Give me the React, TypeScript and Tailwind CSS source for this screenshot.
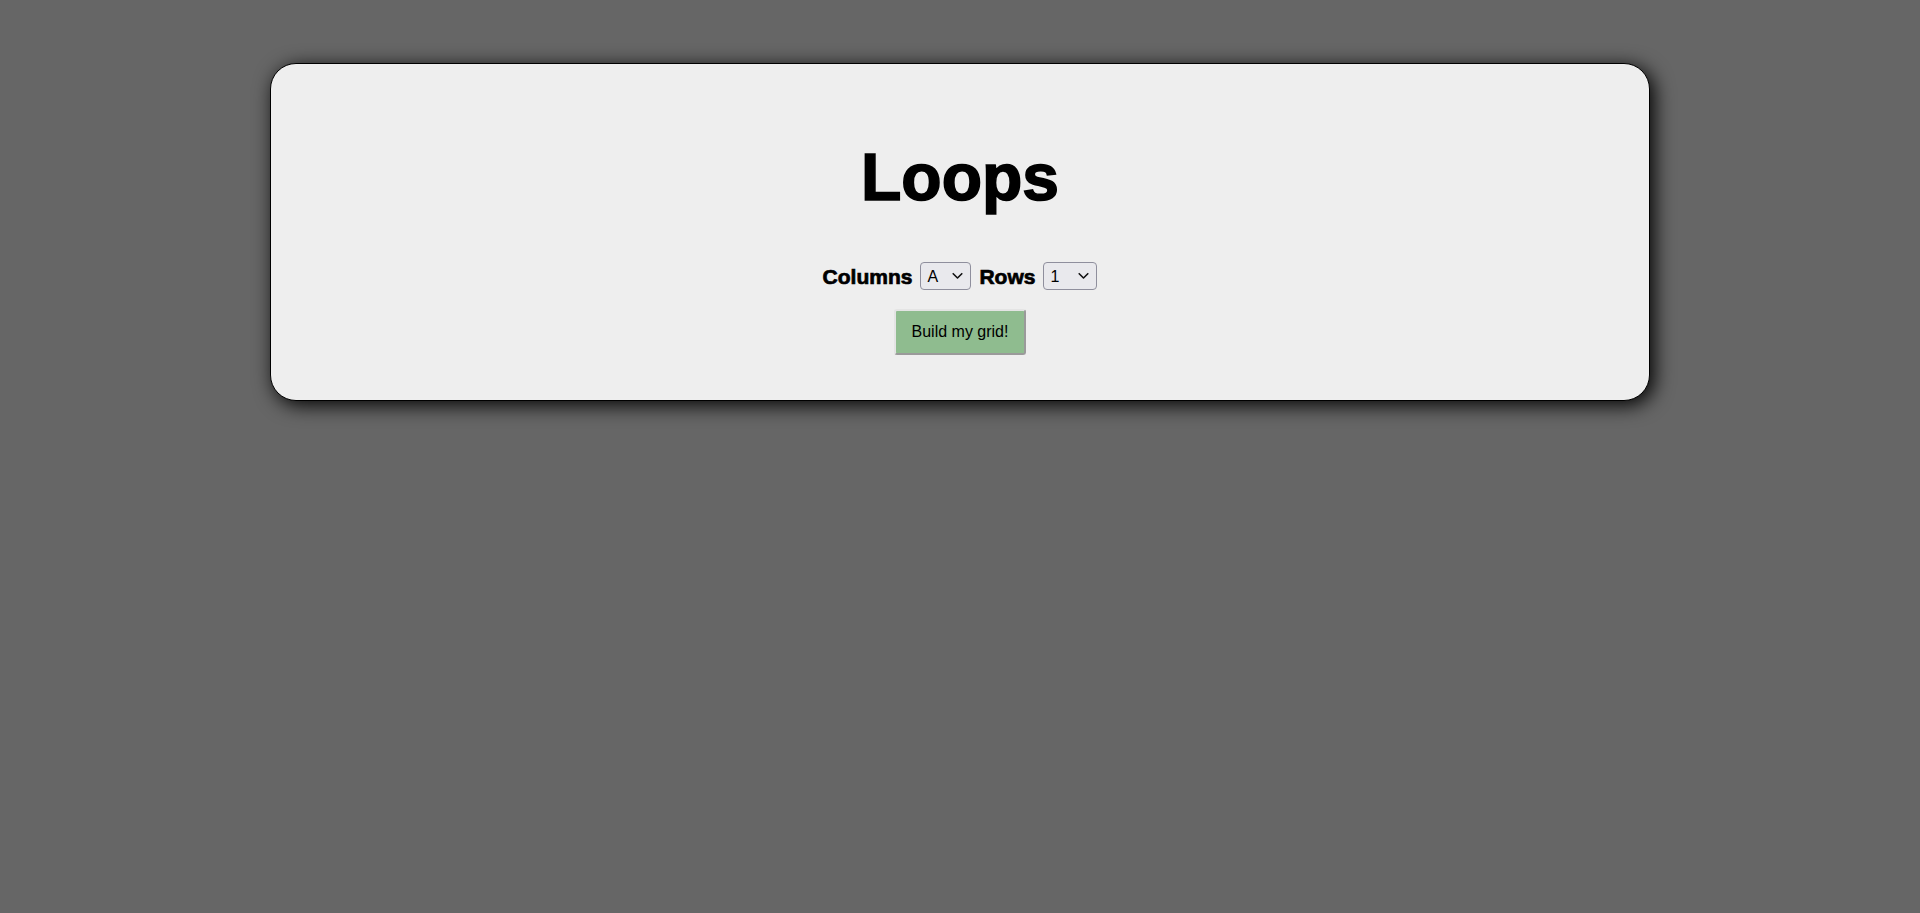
import { useState } from "react";

const cols = ["A", "B", "C", "D", "E", "F", "G", "H", "I", "J"];
const rows = ["1", "2", "3", "4", "5", "6", "7", "8", "9", "10"];

const Chevron = () => (
  <svg
    className="pointer-events-none absolute right-[8px] top-1/2 -translate-y-1/2"
    width="11"
    height="7"
    viewBox="0 0 11 7"
    fill="none"
  >
    <path d="M1.2 1.2 5.5 5.5 9.8 1.2" stroke="#111" strokeWidth="1.6" strokeLinecap="round" strokeLinejoin="round" />
  </svg>
);

type PickerProps = {
  value: string;
  options: string[];
  onChange: (value: string) => void;
  width: string;
};

const Picker = ({ value, options, onChange, width }: PickerProps) => (
  <div className={`relative ${width}`}>
    <select
      value={value}
      onChange={(e) => onChange(e.target.value)}
      className="h-[28px] w-full appearance-none rounded-[4px] border border-[#8f8f9d] bg-[#e9e9ed] pl-[6px] pt-[2px] text-[16px] leading-none text-black outline-none"
    >
      {options.map((o) => (
        <option key={o} value={o}>
          {o}
        </option>
      ))}
    </select>
    <Chevron />
  </div>
);

const App = () => {
  const [col, setCol] = useState("A");
  const [row, setRow] = useState("1");

  return (
    <div className="min-h-[913px] bg-[#666666] pt-[63px] font-['Liberation_Sans',Arial,sans-serif]">
      {/* CARD */}
      <section className="mx-auto flex w-[1380px] flex-col items-center rounded-[26px] border border-black bg-[#eeeeee] pt-[80px] pb-[45px] shadow-[4px_4px_20px_rgba(0,0,0,1)]">
        <h1 className="text-[66px] font-bold leading-none text-black [-webkit-text-stroke:1.6px_black]">Loops</h1>

        {/* CONTROLS */}
        <div className="mt-[52px] flex h-[28px] items-center gap-2">
          <span className="text-[21px] font-bold leading-none [-webkit-text-stroke:0.7px_black]">Columns</span>
          <Picker value={col} options={cols} onChange={setCol} width="w-[51px]" />
          <span className="text-[21px] font-bold leading-none [-webkit-text-stroke:0.7px_black]">Rows</span>
          <Picker value={row} options={rows} onChange={setRow} width="w-[54px]" />
        </div>

        <button className="mt-[19px] h-[46px] rounded-[3px] border-2 border-t-[#e4e4e4] border-l-[#e4e4e4] border-r-[#9a9a9a] border-b-[#9a9a9a] bg-[#8fbc8f] px-[16px] text-[16px] text-black">
          Build my grid!
        </button>
      </section>
    </div>
  );
};

export default App;
